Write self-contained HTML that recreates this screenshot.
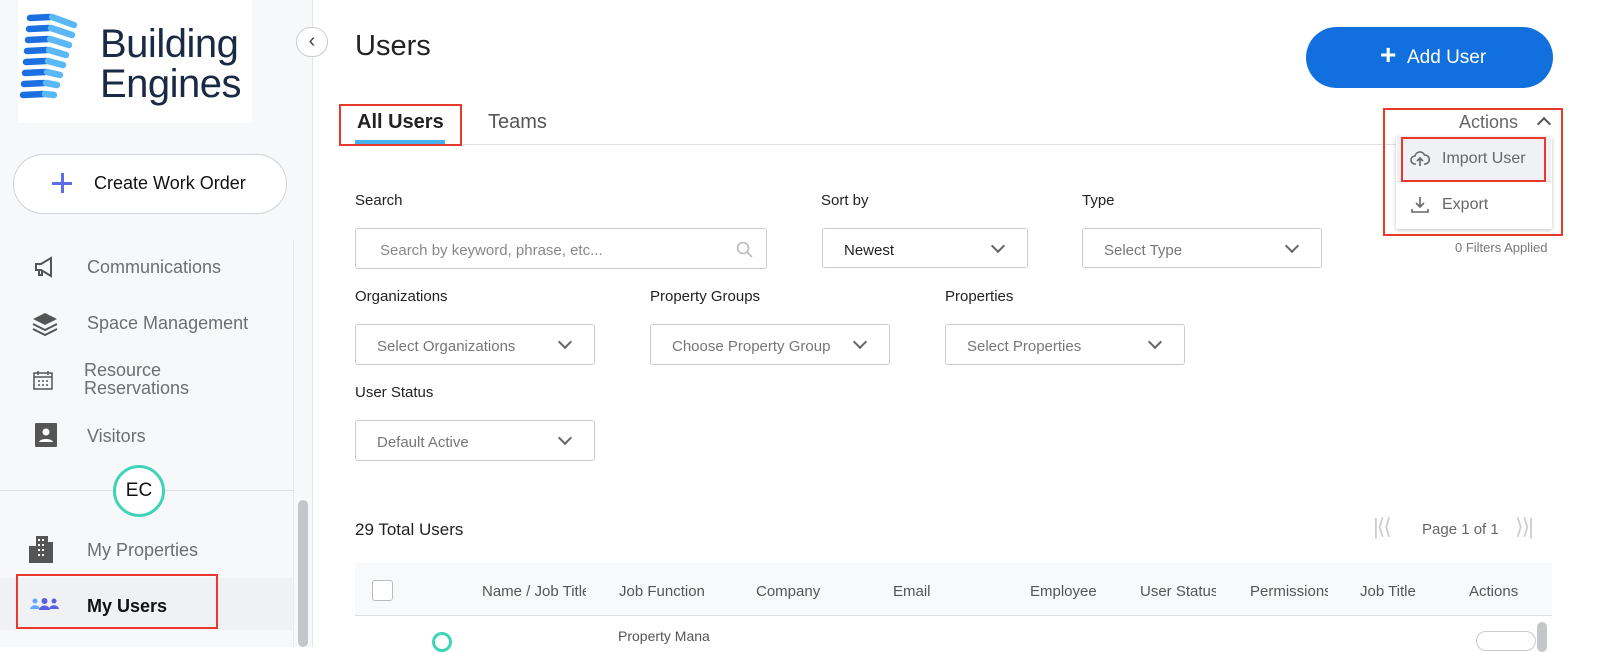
<!DOCTYPE html>
<html><head><meta charset="utf-8"><style>
*{box-sizing:border-box;margin:0;padding:0}
body{width:1600px;height:647px;overflow:hidden;background:#fff;font-family:"Liberation Sans",Arial,sans-serif;position:relative;color:#222}
.a{position:absolute}
.side{left:0;top:0;width:313px;height:647px;background:#f7f8fa;border-right:1px solid #e3e5e8}
.nav{font-size:18px;color:#6b6e73}
.lbl{font-size:15px;color:#222}
.box{border:1px solid #c9ccd0;border-radius:3px;background:#fff;height:41px;font-size:15px;color:#777}
.box .t{position:absolute;left:21px;top:13px;white-space:nowrap;overflow:hidden}
.chev{position:absolute;top:12px;width:10px;height:10px;border-right:2px solid #666;border-bottom:2px solid #666;transform:rotate(45deg)}
.th{font-size:15px;color:#555;top:583px}
.red{border:2px solid #e8392c}
</style></head><body>
<div class="a side"></div>
<div class="a" style="left:18px;top:0;width:234px;height:123px;background:#fff"></div>
<svg class="a" style="left:16px;top:12px" width="64" height="92" viewBox="0 0 64 92">
<g stroke-width="6.5" stroke-linecap="round">
<g stroke="#1b6fe0"><line x1="14" y1="6" x2="34" y2="5"/><line x1="13" y1="17" x2="33" y2="16"/><line x1="12" y1="28" x2="32" y2="27"/><line x1="11" y1="39" x2="31" y2="38"/><line x1="10" y1="50" x2="30" y2="49"/><line x1="9" y1="61" x2="29" y2="60"/><line x1="8" y1="72" x2="28" y2="71"/><line x1="7" y1="83" x2="27" y2="82"/></g>
<g stroke="#5ab8f7"><line x1="36" y1="5" x2="58" y2="13"/><line x1="35" y1="16" x2="56" y2="23"/><line x1="34" y1="27" x2="53" y2="33"/><line x1="33" y1="38" x2="50" y2="43"/><line x1="32" y1="49" x2="47" y2="53"/><line x1="31" y1="60" x2="44" y2="63"/><line x1="30" y1="71" x2="41" y2="73"/><line x1="29" y1="82" x2="38" y2="83"/></g></g></svg>
<div class="a" style="left:100px;top:24px;font-size:40px;line-height:40px;color:#1b2a44;letter-spacing:-0.5px">Building<br>Engines</div>
<div class="a" style="left:13px;top:154px;width:274px;height:60px;border:1px solid #cfd2d6;border-radius:30px;background:#fff"></div>
<div class="a" style="left:52px;top:173px;width:20px;height:20px"><div class="a" style="left:9px;top:0;width:2.5px;height:20px;background:#5b6ee8"></div><div class="a" style="left:0;top:9px;width:20px;height:2.5px;background:#5b6ee8"></div></div>
<div class="a" style="left:94px;top:173px;font-size:18px;color:#111">Create Work Order</div>
<div class="a" style="left:296px;top:27px;width:32px;height:30px;border:1px solid #ccc;border-radius:16px;background:#fff;font-size:20px;text-align:center;line-height:26px;color:#444">&#8249;</div>
<div class="a" style="left:293px;top:240px;width:1px;height:407px;background:#e6e8eb"></div>
<div class="a" style="left:298px;top:500px;width:10px;height:147px;background:#c4c6c9;border-radius:5px"></div>
<svg class="a" style="left:34px;top:256px" width="22" height="22" viewBox="0 0 22 22" fill="none" stroke="#555" stroke-width="2"><path d="M2 8h5l10-6v18L7 14H2z M5 14v5h3v-5"/></svg>
<div class="a nav" style="left:87px;top:257px">Communications</div>
<svg class="a" style="left:32px;top:312px" width="26" height="24" viewBox="0 0 26 24" fill="#555"><path d="M13 1L1 7l12 6 12-6z"/><path d="M1 12l12 6 12-6" fill="none" stroke="#555" stroke-width="2"/><path d="M1 17l12 6 12-6" fill="none" stroke="#555" stroke-width="2"/></svg>
<div class="a nav" style="left:87px;top:313px">Space Management</div>
<svg class="a" style="left:33px;top:370px" width="20" height="20" viewBox="0 0 20 20" fill="none" stroke="#555" stroke-width="1.5"><rect x="1" y="3" width="18" height="16"/><path d="M5 1v4M15 1v4M1 7h18"/><path d="M5 11h2M9 11h2M13 11h2M5 15h2M9 15h2M13 15h2"/></svg>
<div class="a nav" style="left:84px;top:361px;line-height:18px">Resource<br>Reservations</div>
<svg class="a" style="left:35px;top:423px" width="22" height="24" viewBox="0 0 22 24"><rect width="22" height="24" rx="1" fill="#555"/><circle cx="11" cy="9" r="3.5" fill="#fff"/><path d="M4 19c1-4 13-4 14 0z" fill="#fff"/></svg>
<div class="a nav" style="left:87px;top:426px">Visitors</div>
<div class="a" style="left:0;top:490px;width:293px;height:1px;background:#dcdfe2"></div>
<div class="a" style="left:113px;top:465px;width:52px;height:52px;border:3px solid #3fd4b8;border-radius:50%;background:#fff;text-align:center;line-height:46px;font-size:19px;color:#111">EC</div>
<svg class="a" style="left:29px;top:536px" width="24" height="27" viewBox="0 0 24 27" fill="#555"><rect x="7" y="0" width="12" height="27"/><rect x="0" y="10" width="8" height="17"/><rect x="18" y="6" width="6" height="21"/><g fill="#f7f8fa"><rect x="9" y="3" width="2" height="2"/><rect x="13" y="3" width="2" height="2"/><rect x="9" y="8" width="2" height="2"/><rect x="13" y="8" width="2" height="2"/><rect x="9" y="13" width="2" height="2"/><rect x="13" y="13" width="2" height="2"/><rect x="9" y="18" width="2" height="2"/><rect x="13" y="18" width="2" height="2"/></g></svg>
<div class="a nav" style="left:87px;top:540px">My Properties</div>
<div class="a" style="left:0;top:578px;width:293px;height:52px;background:#eff1f4"></div>
<svg class="a" style="left:30px;top:597px" width="29" height="14" viewBox="0 0 29 14"><circle cx="5" cy="4" r="2.5" fill="#6aa6ff"/><circle cx="14.5" cy="4" r="3" fill="#5a5ee0"/><circle cx="24" cy="4" r="2.5" fill="#5a5ee0"/><path d="M0 12c1-5 9-5 10 0z" fill="#6aa6ff"/><path d="M9 13c1-6 10-6 11 0z" fill="#5a5ee0"/><path d="M19 12c1-5 9-5 10 0z" fill="#5a5ee0"/></svg>
<div class="a" style="left:87px;top:596px;font-size:18px;font-weight:bold;color:#111">My Users</div>
<div class="a red" style="left:16px;top:574px;width:202px;height:55px"></div>

<div class="a" style="left:355px;top:30px;font-size:29px;color:#222">Users</div>
<div class="a" style="left:1306px;top:27px;width:247px;height:61px;background:#1270de;border-radius:31px;color:#fff;font-size:19px"><span class="a" style="left:74px;top:14px;font-size:28px;font-weight:bold;line-height:28px">+</span><span class="a" style="left:101px;top:20px">Add User</span></div>
<div class="a" style="left:338px;top:144px;width:1213px;height:1px;background:#dfe1e4"></div>
<div class="a" style="left:357px;top:111px;font-size:20px;font-weight:bold;color:#222">All Users</div>
<div class="a" style="left:355px;top:140px;width:90px;height:4px;background:#4ab1f0"></div>
<div class="a red" style="left:339px;top:104px;width:123px;height:42px"></div>
<div class="a" style="left:488px;top:111px;font-size:20px;color:#555">Teams</div>
<div class="a" style="left:1459px;top:112px;font-size:18px;color:#666">Actions</div>
<div class="a" style="left:1539px;top:119px;width:10px;height:10px;border-left:2px solid #555;border-top:2px solid #555;transform:rotate(45deg)"></div>
<div class="a" style="left:1396px;top:137px;width:156px;height:92px;background:#fff;box-shadow:0 1px 4px rgba(0,0,0,.25);border-radius:2px"></div>
<div class="a" style="left:1397px;top:137px;width:154px;height:45px;background:#eff1f5;border-bottom:1px solid #ddd"></div>
<svg class="a" style="left:1410px;top:150px" width="20" height="18" viewBox="0 0 20 18" fill="none" stroke="#666" stroke-width="1.6"><path d="M6 14H5a4 4 0 0 1 0-8 5 5 0 0 1 9.5-1A4 4 0 0 1 15 14h-1"/><path d="M10 16V8M7 11l3-3 3 3"/></svg>
<div class="a" style="left:1442px;top:150px;font-size:16px;color:#666">Import User</div>
<div class="a red" style="left:1401px;top:137px;width:145px;height:45px"></div>
<svg class="a" style="left:1410px;top:196px" width="20" height="18" viewBox="0 0 20 18" fill="none" stroke="#666" stroke-width="1.6"><path d="M10 1v10M6 7l4 4 4-4M2 13v3h16v-3"/></svg>
<div class="a" style="left:1442px;top:196px;font-size:16px;color:#666">Export</div>
<div class="a red" style="left:1383px;top:108px;width:180px;height:128px"></div>
<div class="a" style="left:1455px;top:240px;font-size:13px;color:#777">0 Filters Applied</div>

<div class="a lbl" style="left:355px;top:192px">Search</div>
<div class="a box" style="left:355px;top:228px;width:412px"><span class="t" style="left:24px;color:#888">Search by keyword, phrase, etc...</span>
<svg class="a" style="left:380px;top:12px" width="18" height="18" viewBox="0 0 18 18" fill="none" stroke="#bbb" stroke-width="1.6"><circle cx="7" cy="7" r="5.5"/><path d="M11 11l5 5"/></svg></div>
<div class="a lbl" style="left:821px;top:192px">Sort by</div>
<div class="a box" style="left:822px;top:228px;width:206px;height:40px;color:#222"><span class="t">Newest</span><div class="chev" style="left:170px"></div></div>
<div class="a lbl" style="left:1082px;top:192px">Type</div>
<div class="a box" style="left:1082px;top:228px;width:240px;height:40px"><span class="t">Select Type</span><div class="chev" style="left:204px"></div></div>
<div class="a lbl" style="left:355px;top:288px">Organizations</div>
<div class="a box" style="left:355px;top:324px;width:240px"><span class="t">Select Organizations</span><div class="chev" style="left:204px"></div></div>
<div class="a lbl" style="left:650px;top:288px">Property Groups</div>
<div class="a box" style="left:650px;top:324px;width:240px"><span class="t" style="width:158px">Choose Property Groups</span><div class="chev" style="left:204px"></div></div>
<div class="a lbl" style="left:945px;top:288px">Properties</div>
<div class="a box" style="left:945px;top:324px;width:240px"><span class="t">Select Properties</span><div class="chev" style="left:204px"></div></div>
<div class="a lbl" style="left:355px;top:384px">User Status</div>
<div class="a box" style="left:355px;top:420px;width:240px"><span class="t">Default Active</span><div class="chev" style="left:204px"></div></div>

<div class="a" style="left:355px;top:520px;font-size:17px;color:#222">29 Total Users</div>
<div class="a" style="left:1373px;top:514px;font-size:22px;color:#ccc;letter-spacing:-2px">|&#10216;&#10216;</div>
<div class="a" style="left:1422px;top:521px;font-size:15px;color:#666">Page 1 of 1</div>
<div class="a" style="left:1515px;top:514px;font-size:22px;color:#ccc;letter-spacing:-2px">&#10217;&#10217;|</div>
<div class="a" style="left:355px;top:563px;width:1197px;height:53px;background:#f8f9fa;border-bottom:1px solid #dcdfe2"></div>
<div class="a" style="left:372px;top:580px;width:21px;height:21px;border:1px solid #bbb;border-radius:3px;background:#fff"></div>
<div class="a th" style="left:482px;width:104px;overflow:hidden;white-space:nowrap">Name / Job Title</div>
<div class="a th" style="left:619px">Job Function</div>
<div class="a th" style="left:756px">Company</div>
<div class="a th" style="left:893px">Email</div>
<div class="a th" style="left:1030px">Employee</div>
<div class="a th" style="left:1140px;width:76px;overflow:hidden;white-space:nowrap">User Status</div>
<div class="a th" style="left:1250px;width:78px;overflow:hidden;white-space:nowrap">Permissions</div>
<div class="a th" style="left:1360px">Job Title</div>
<div class="a th" style="left:1469px">Actions</div>
<div class="a" style="left:618px;top:628px;font-size:14px;color:#555">Property Mana</div>
<div class="a" style="left:432px;top:632px;width:20px;height:20px;border-radius:50%;border:3px solid #3fd4b8"></div>
<div class="a" style="left:1476px;top:631px;width:60px;height:20px;border:1px solid #ccc;border-radius:10px"></div>
<div class="a" style="left:1537px;top:622px;width:10px;height:30px;background:#c4c6c9;border-radius:5px"></div>
</body></html>
